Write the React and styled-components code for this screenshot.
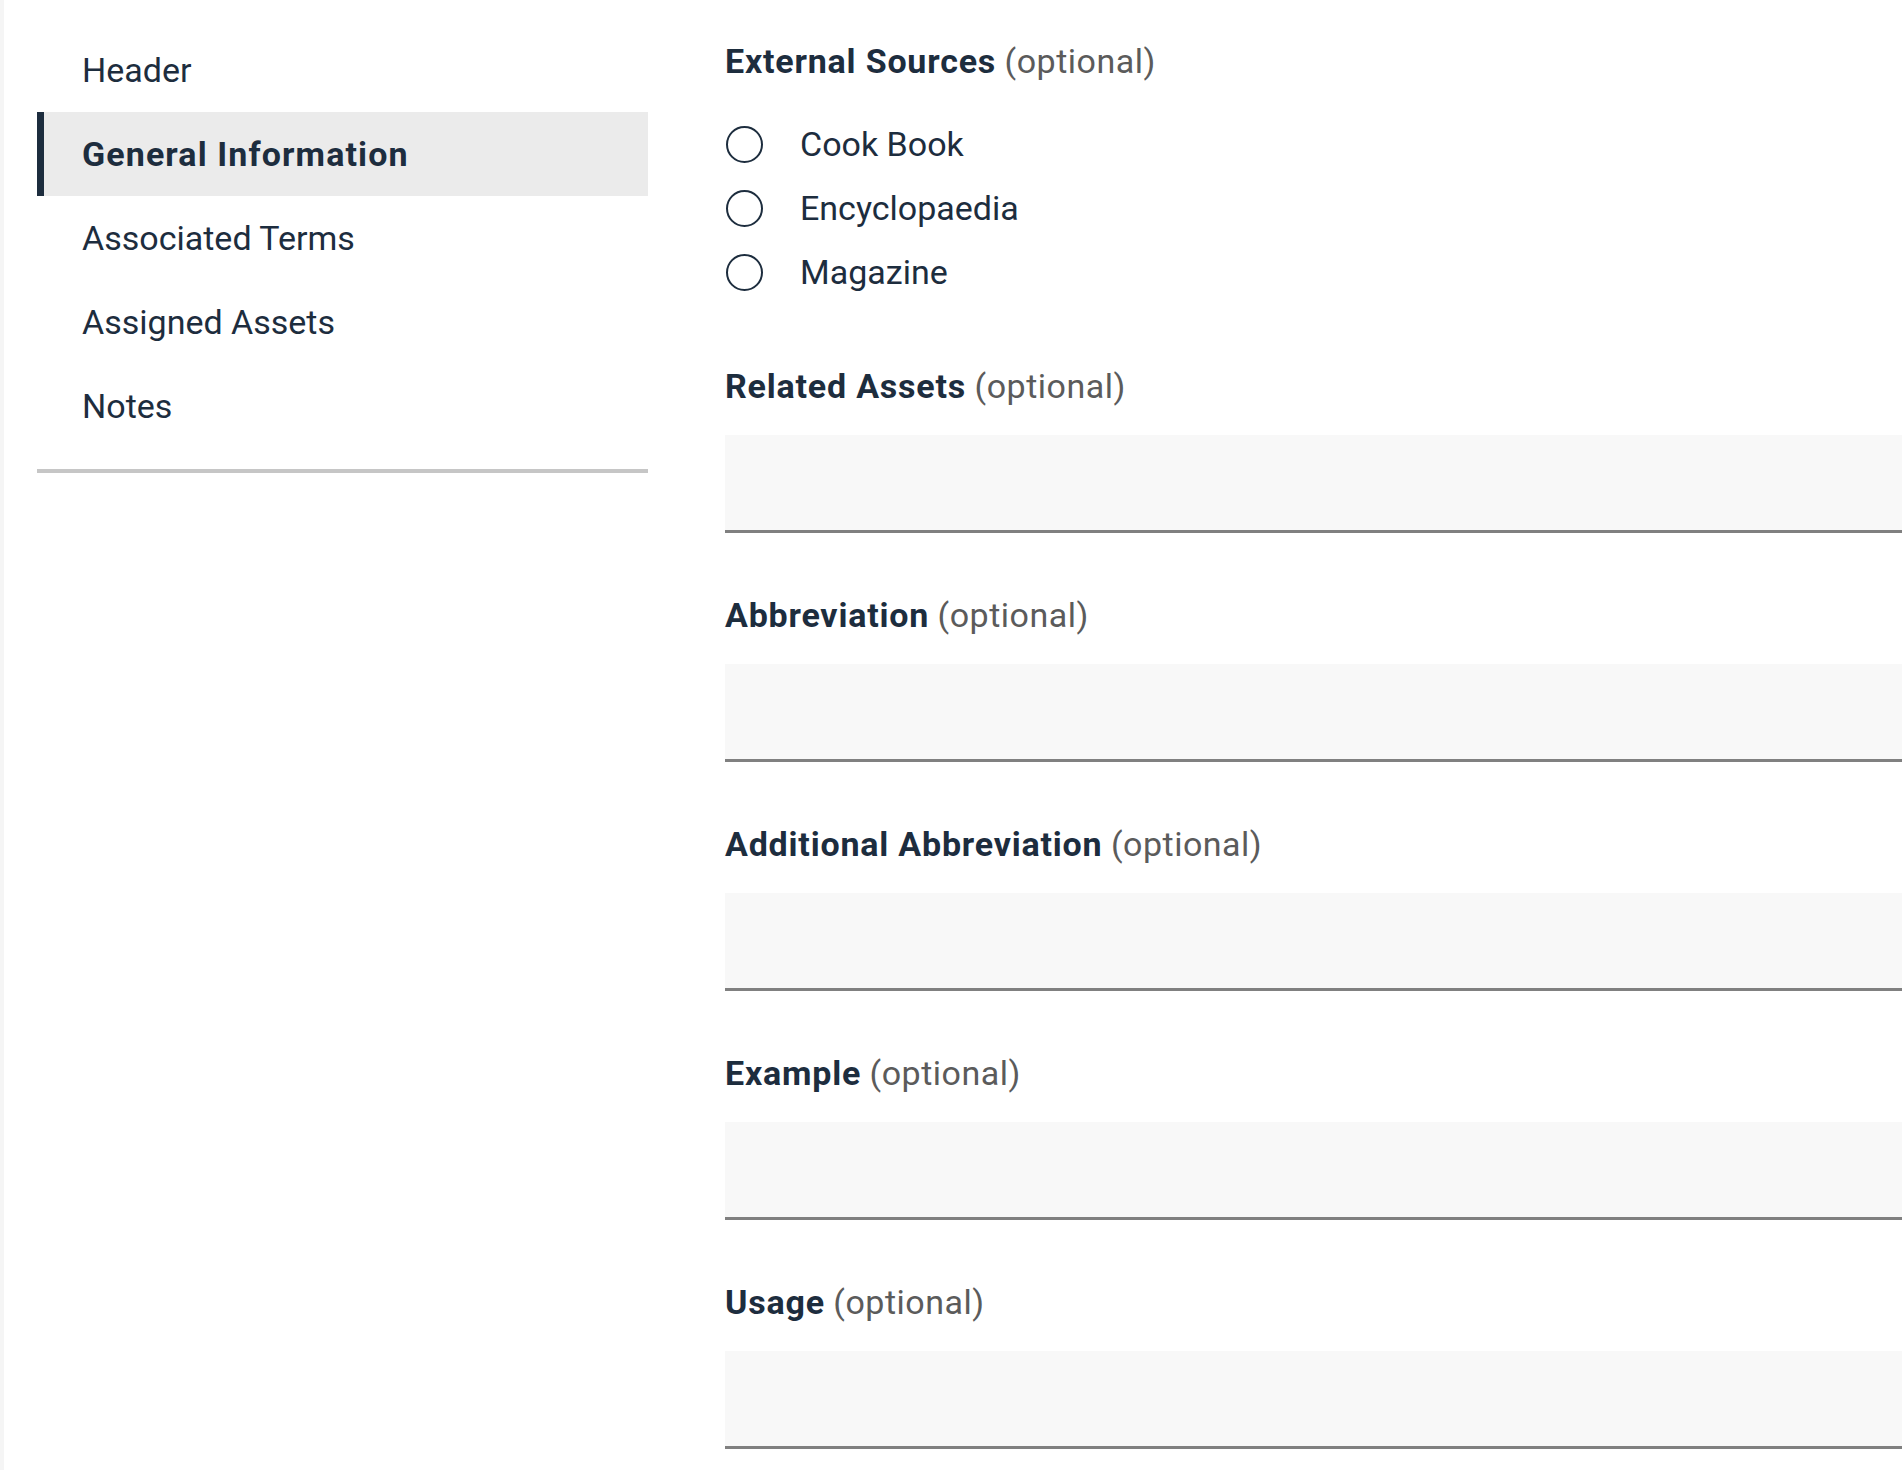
import React, { useState } from "react";
import styled, { createGlobalStyle } from "styled-components";

const navItems = [
  "Header",
  "General Information",
  "Associated Terms",
  "Assigned Assets",
  "Notes",
];

const sources = ["Cook Book", "Encyclopaedia", "Magazine"];

const fields = [
  "Related Assets",
  "Abbreviation",
  "Additional Abbreviation",
  "Example",
  "Usage",
];

const App = () => {
  const [active, setActive] = useState("General Information");
  const [source, setSource] = useState(null);

  return (
    <>
      <GlobalStyle />
      <Page>
        <Sidebar>
          <NavList>
            {navItems.map((item) => (
              <NavItem
                key={item}
                $active={item === active}
                onClick={() => setActive(item)}
              >
                {item}
              </NavItem>
            ))}
          </NavList>
        </Sidebar>

        <Main>
          <Group>
            <Label>
              <strong>External Sources</strong> <span>(optional)</span>
            </Label>
            <RadioList>
              {sources.map((item) => (
                <RadioRow key={item} onClick={() => setSource(item)}>
                  <RadioCircle $checked={source === item} />
                  {item}
                </RadioRow>
              ))}
            </RadioList>
          </Group>

          {fields.map((field) => (
            <Group key={field}>
              <Label>
                <strong>{field}</strong> <span>(optional)</span>
              </Label>
              <TextInput aria-label={field} />
            </Group>
          ))}
        </Main>
      </Page>
    </>
  );
};

const GlobalStyle = createGlobalStyle`
  html, body {
    margin: 0;
    padding: 0;
    background: #ffffff;
    overflow: hidden;
  }

  body {
    font-family: Roboto, "Liberation Sans", sans-serif;
    color: #1d2d3e;
  }
`;

const Page = styled.div`
  display: flex;
  align-items: flex-start;
  gap: 77px;
  min-height: 1470px;
  border-left: 4px solid #f5f5f5;
  box-sizing: border-box;
`;

const Sidebar = styled.nav`
  width: 611px;
  flex-shrink: 0;
  margin-left: 33px;
  padding-top: 28px;
`;

const NavList = styled.ul`
  list-style: none;
  margin: 0;
  padding: 0 0 21px;
  border-bottom: 4px solid #c6c6c6;
`;

const NavItem = styled.li`
  height: 84px;
  display: flex;
  align-items: center;
  box-sizing: border-box;
  padding-left: 38px;
  border-left: 7px solid ${(p) => (p.$active ? "#1d2d3e" : "transparent")};
  background: ${(p) => (p.$active ? "#ebebeb" : "transparent")};
  font-size: 34px;
  line-height: 40px;
  font-weight: ${(p) => (p.$active ? 700 : 400)};
  letter-spacing: ${(p) => (p.$active ? "1.1px" : "0")};
  cursor: pointer;
`;

const Main = styled.main`
  flex: 1;
  display: flex;
  flex-direction: column;
  gap: 62px;
  padding-top: 41px;
`;

const Group = styled.section`
  display: flex;
  flex-direction: column;
  gap: 29px;

  &:first-child {
    gap: 31px;
  }
`;

const Label = styled.label`
  font-size: 34px;
  line-height: 40px;

  strong {
    font-weight: 700;
    letter-spacing: 0.8px;
    color: #1d2d3e;
  }

  span {
    font-weight: 400;
    letter-spacing: 0.5px;
    color: #5b5b5b;
  }
`;

const RadioList = styled.div`
  display: flex;
  flex-direction: column;
`;

const RadioRow = styled.div`
  height: 64px;
  display: flex;
  align-items: center;
  gap: 37px;
  font-size: 34px;
  line-height: 40px;
  cursor: pointer;
`;

const RadioCircle = styled.span`
  width: 37px;
  height: 37px;
  box-sizing: border-box;
  margin-left: 1px;
  border-radius: 50%;
  border: 2px solid #1d2d3e;
  flex-shrink: 0;
  background: ${(p) =>
    p.$checked ? "radial-gradient(circle, #1d2d3e 40%, transparent 42%)" : "#ffffff"};
`;

const TextInput = styled.input`
  display: block;
  width: 100%;
  height: 98px;
  box-sizing: border-box;
  border: none;
  border-bottom: 3px solid #808080;
  background: #f8f8f8;
  padding: 0 24px;
  font-family: inherit;
  font-size: 30px;
  color: #1d2d3e;
  outline: none;
`;

export default App;
